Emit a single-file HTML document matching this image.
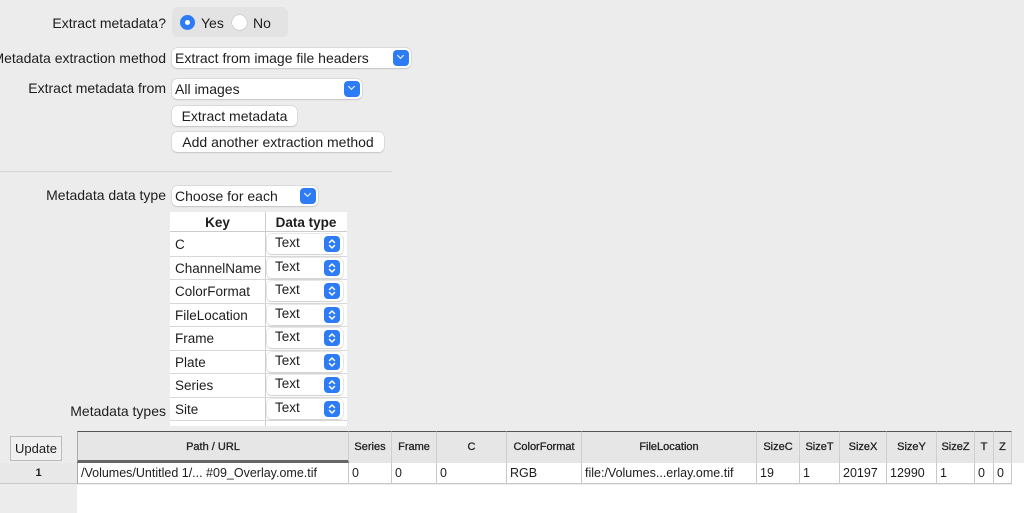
<!DOCTYPE html><html><head><style>
*{margin:0;padding:0;box-sizing:border-box}
body{width:1024px;height:513px;background:#ececec;font-family:"Liberation Sans",sans-serif;font-size:13.5px;color:#1d1d1d;position:relative;overflow:hidden}
.a{position:absolute;white-space:nowrap}
.lbl{text-align:right;right:858px;font-size:14px}
.sel{position:absolute;background:#fff;border-radius:5px;box-shadow:0 0 0 .5px #c8c8c8,0 1px 1px #c4c4c4;padding-left:3px;line-height:21px;height:20px;font-size:14px}
.chev{position:absolute;right:2px;top:2px;width:16px;height:16px;border-radius:4px;background:#2d7cf6}
.chev:after{content:"";position:absolute;left:5px;top:3px;width:4px;height:4px;border-right:1.6px solid #fff;border-bottom:1.6px solid #fff;transform:rotate(45deg)}
.btn{position:absolute;background:#fff;border-radius:5px;box-shadow:0 0 0 .5px #c8c8c8,0 1px 1px #c4c4c4;text-align:center;line-height:20px;height:20px;font-size:14px}
.kt{position:absolute;left:170px;top:212px;width:177px;background:#fff}
.r{position:absolute;left:0;width:177px;height:23.5px;border-bottom:1px solid #d8d8d8}
.r .k{position:absolute;left:5px;top:4px}
.r .d{position:absolute;left:97px;top:1px;width:76px;height:20px;border-radius:4px;box-shadow:0 0 0 .5px #d0d0d0,0 1px 1px #ccc;background:#fff}
.r .d span{position:absolute;left:8px;top:1px}
.ud{position:absolute;right:3px;top:2px;width:16px;height:16px;border-radius:4px;background:#2d7cf6}
.hd{position:absolute;top:431px;height:32px;background:#e6e6e6;border-top:1px solid #555;border-right:1px solid #cfcfcf;font-size:11px;text-align:center;line-height:31px;color:#222;-webkit-text-stroke:.3px #222}
.dc{position:absolute;top:463px;height:21px;background:#fff;border-right:1px solid #c8c8c8;border-bottom:1px solid #c8c8c8;font-size:12.5px;line-height:21px;padding-left:3px;overflow:hidden}
</style></head><body>
<svg width="0" height="0" style="position:absolute"><symbol id="ud" viewBox="0 0 16 16"><path d="M5.5 6.5 8 4 10.5 6.5M5.5 9.5 8 12 10.5 9.5" fill="none" stroke="#fff" stroke-width="1.5" stroke-linecap="round" stroke-linejoin="round"/></symbol></svg>
<div class="a lbl" style="top:15px">Extract metadata?</div>
<div class="a" style="left:172px;top:7px;width:116px;height:30px;background:#e3e3e3;border-radius:6px"></div>
<div class="a" style="left:180px;top:15px;width:15px;height:15px;border-radius:50%;background:#2d7cf6"></div>
<div class="a" style="left:185px;top:20px;width:5px;height:5px;border-radius:50%;background:#fff"></div>
<div class="a" style="left:201px;top:15px;font-size:14px">Yes</div>
<div class="a" style="left:232px;top:15px;width:15px;height:15px;border-radius:50%;background:#fff;box-shadow:0 0 0 .5px #bbb"></div>
<div class="a" style="left:253px;top:15px;font-size:14px">No</div>

<div class="a lbl" style="top:50px">Metadata extraction method</div>
<div class="sel" style="left:172px;top:48px;width:239px">Extract from image file headers<div class="chev"></div></div>
<div class="a lbl" style="top:80px">Extract metadata from</div>
<div class="sel" style="left:172px;top:79px;width:190px">All images<div class="chev"></div></div>
<div class="btn" style="left:172px;top:106px;width:125px">Extract metadata</div>
<div class="btn" style="left:172px;top:132px;width:212px">Add another extraction method</div>
<div class="a" style="left:0;top:171px;width:392px;height:1px;background:#d6d6d6"></div>
<div class="a lbl" style="top:187px">Metadata data type</div>
<div class="sel" style="left:172px;top:186px;width:146px">Choose for each<div class="chev"></div></div>
<div class="a lbl" style="top:403px">Metadata types</div>

<div class="kt" style="height:214px">
<div class="a" style="left:0;top:0;width:95px;height:20px;font-weight:bold;text-align:center;line-height:22px;border-bottom:1px solid #ccc">Key</div>
<div class="a" style="left:95px;top:0;width:82px;height:20px;font-weight:bold;text-align:center;line-height:22px;border-bottom:1px solid #ccc">Data type</div>
<div class="a" style="left:95px;top:0;width:1px;height:214px;background:#ccc"></div>
<div class="r" style="top:21px"><span class="k">C</span><div class="d"><span>Text</span><svg class="ud"><use href="#ud"/></svg></div></div>
<div class="r" style="top:44.5px"><span class="k">ChannelName</span><div class="d"><span>Text</span><svg class="ud"><use href="#ud"/></svg></div></div>
<div class="r" style="top:68px"><span class="k">ColorFormat</span><div class="d"><span>Text</span><svg class="ud"><use href="#ud"/></svg></div></div>
<div class="r" style="top:91.5px"><span class="k">FileLocation</span><div class="d"><span>Text</span><svg class="ud"><use href="#ud"/></svg></div></div>
<div class="r" style="top:115px"><span class="k">Frame</span><div class="d"><span>Text</span><svg class="ud"><use href="#ud"/></svg></div></div>
<div class="r" style="top:138.5px"><span class="k">Plate</span><div class="d"><span>Text</span><svg class="ud"><use href="#ud"/></svg></div></div>
<div class="r" style="top:162px"><span class="k">Series</span><div class="d"><span>Text</span><svg class="ud"><use href="#ud"/></svg></div></div>
<div class="r" style="top:185.5px"><span class="k">Site</span><div class="d"><span>Text</span><svg class="ud"><use href="#ud"/></svg></div></div>
</div>

<div class="a" style="left:77px;top:485px;width:947px;height:28px;background:#fff"></div>
<div class="a" style="left:1012px;top:463px;width:12px;height:22px;background:#fff"></div>
<div class="a" style="left:10px;top:436px;width:52px;height:25px;border:1px solid #bbb;background:#f0f0f0;text-align:center;line-height:23px;font-size:13px">Update</div>
<div class="a" style="left:0;top:463px;width:77px;height:21px;background:#e8e8e8;border-bottom:1px solid #c8c8c8;text-align:center;font-size:11px;font-weight:bold;line-height:21px">1</div>

<div class="hd" style="left:77px;width:272px;border-bottom:3px solid #666;border-left:1px solid #aaa">Path / URL</div>
<div class="hd" style="left:349px;width:43px">Series</div>
<div class="hd" style="left:392px;width:45px">Frame</div>
<div class="hd" style="left:437px;width:70px">C</div>
<div class="hd" style="left:507px;width:75px">ColorFormat</div>
<div class="hd" style="left:582px;width:175px">FileLocation</div>
<div class="hd" style="left:757px;width:43px">SizeC</div>
<div class="hd" style="left:800px;width:40px">SizeT</div>
<div class="hd" style="left:840px;width:47px">SizeX</div>
<div class="hd" style="left:887px;width:50px">SizeY</div>
<div class="hd" style="left:937px;width:38px">SizeZ</div>
<div class="hd" style="left:975px;width:19px">T</div>
<div class="hd" style="left:994px;width:18px">Z</div>

<div class="dc" style="left:77px;width:272px;border-left:1px solid #aaa">/Volumes/Untitled 1/... #09_Overlay.ome.tif</div>
<div class="dc" style="left:349px;width:43px">0</div>
<div class="dc" style="left:392px;width:45px">0</div>
<div class="dc" style="left:437px;width:70px">0</div>
<div class="dc" style="left:507px;width:75px">RGB</div>
<div class="dc" style="left:582px;width:175px">file:/Volumes...erlay.ome.tif</div>
<div class="dc" style="left:757px;width:43px">19</div>
<div class="dc" style="left:800px;width:40px">1</div>
<div class="dc" style="left:840px;width:47px">20197</div>
<div class="dc" style="left:887px;width:50px">12990</div>
<div class="dc" style="left:937px;width:38px">1</div>
<div class="dc" style="left:975px;width:19px">0</div>
<div class="dc" style="left:994px;width:18px">0</div>
</body></html>
